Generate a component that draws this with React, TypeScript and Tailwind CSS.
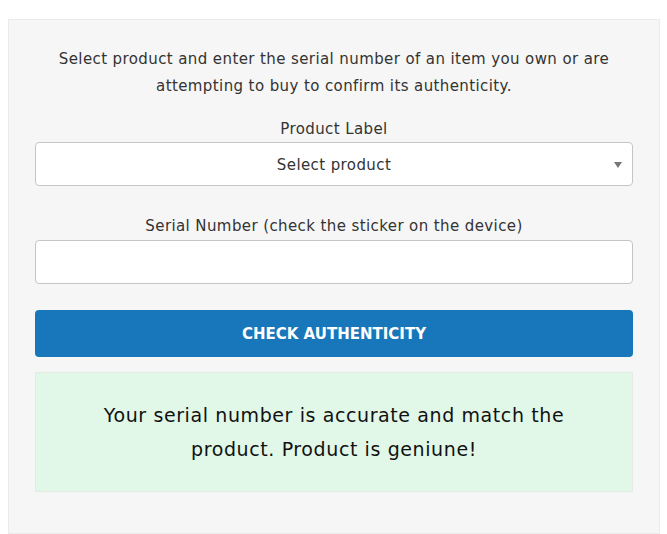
import React from 'react';

export default function App() {
  return (
    <div className="w-[667px] h-[534px] bg-white pt-[19px] pl-[8px] pr-[7px]" style={{ fontFamily: '"DejaVu Sans", sans-serif' }}>
      <div className="h-[515px] bg-[#f6f6f6] border border-[#ebebeb] px-[26px] pt-[26px] text-[#333333]">
        <p className="text-center text-[15px] leading-[27px] tracking-[0.4px] px-[10px]">
          Select product and enter the serial number of an item you own or are attempting to buy to confirm its authenticity.
        </p>

        <div className="mt-[18px] flex flex-col">
          <label className="text-center text-[15px] leading-[22px] tracking-[0.4px] mb-[2px]">Product Label</label>
          <div className="relative h-[44px] bg-white border border-[#c5c5c5] rounded-[4px] flex items-center justify-center pt-[2px]">
            <span className="text-[15px] tracking-[0.4px]">Select product</span>
            <span className="absolute right-[10px] top-[19px] w-0 h-0 border-l-[4px] border-r-[4px] border-t-[6px] border-l-transparent border-r-transparent border-t-[#777777]"></span>
          </div>
        </div>

        <div className="mt-[29px] flex flex-col">
          <label className="text-center text-[15px] leading-[22px] tracking-[0.4px] mb-[3px]">Serial Number (check the sticker on the device)</label>
          <div className="h-[44px] bg-white border border-[#c5c5c5] rounded-[4px]"></div>
        </div>

        <button className="mt-[26px] w-full h-[47px] bg-[#1877bb] rounded-[4px] text-white font-bold text-[15px] uppercase pt-[2px]">
          Check Authenticity
        </button>

        <div className="mt-[15px] h-[120px] bg-[#e1f7e7] border border-[#e4ebe5] flex items-center justify-center px-[50px]">
          <p className="text-center text-[19px] leading-[34px] tracking-[0.6px] text-[#111111]">
            Your serial number is accurate and match the product. Product is geniune!
          </p>
        </div>
      </div>
    </div>
  );
}
